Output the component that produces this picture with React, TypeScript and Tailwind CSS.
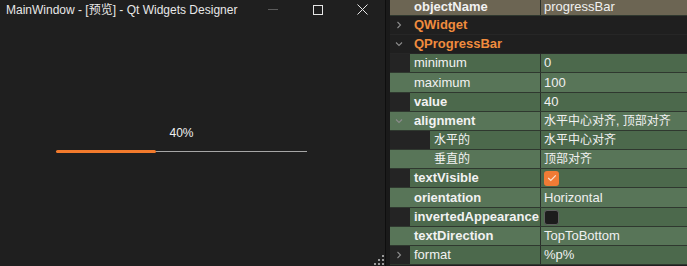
type Row = {
  name: string;
  value?: string;
  kind: 'header' | 'group' | 'prop';
  bold?: boolean;
  alt?: boolean;
  level?: number;
  chevron?: 'right' | 'down';
  check?: 'on' | 'off';
  tall?: boolean;
};

const rows: Row[] = [
  { name: 'objectName', value: 'progressBar', kind: 'header', bold: true },
  { name: 'QWidget', kind: 'group', chevron: 'right' },
  { name: 'QProgressBar', kind: 'group', chevron: 'down' },
  { name: 'minimum', value: '0', kind: 'prop' },
  { name: 'maximum', value: '100', kind: 'prop', alt: true, tall: true },
  { name: 'value', value: '40', kind: 'prop', bold: true },
  { name: 'alignment', value: '水平中心对齐, 顶部对齐', kind: 'prop', bold: true, alt: true, chevron: 'down' },
  { name: '水平的', value: '水平中心对齐', kind: 'prop', level: 1 },
  { name: '垂直的', value: '顶部对齐', kind: 'prop', level: 1, alt: true },
  { name: 'textVisible', kind: 'prop', bold: true, check: 'on' },
  { name: 'orientation', value: 'Horizontal', kind: 'prop', bold: true, alt: true, tall: true },
  { name: 'invertedAppearance', kind: 'prop', bold: true, check: 'off' },
  { name: 'textDirection', value: 'TopToBottom', kind: 'prop', bold: true, alt: true },
  { name: 'format', value: '%p%', kind: 'prop', chevron: 'right' },
];

const cjk = /[\u4e00-\u9fff]/;

function Chevron({ dir }: { dir: 'right' | 'down' }) {
  return (
    <svg width="8" height="8" viewBox="0 0 8 8" className="absolute left-[5px] top-1/2 -translate-y-1/2">
      {dir === 'right' ? (
        <path d="M2.5 1 L5.5 4 L2.5 7" fill="none" stroke="#8c8c8c" strokeWidth="1.1" />
      ) : (
        <path d="M1 2.5 L4 5.5 L7 2.5" fill="none" stroke="#8c8c8c" strokeWidth="1.1" />
      )}
    </svg>
  );
}

function CheckBox({ on }: { on: boolean }) {
  return on ? (
    <div className="h-[15px] w-[15px] rounded-[3px] bg-[#f07b35] flex items-center justify-center">
      <svg width="10" height="8" viewBox="0 0 10 8">
        <path d="M1.2 4 L3.8 6.4 L8.8 1.4" fill="none" stroke="#fbe3d2" strokeWidth="1.2" />
      </svg>
    </div>
  ) : (
    <div className="h-[15px] w-[15px] rounded-[3px] bg-[#1c1c1c] border border-[#5e5e5e]" />
  );
}

function PropRow({ row }: { row: Row }) {
  const height = row.kind === 'header' ? 'h-[18px]' : row.tall ? 'h-[20px]' : 'h-[19px]';

  if (row.kind === 'group') {
    return (
      <div className={`relative flex ${height} items-center border-b border-[#262626] bg-[#1f1f1f]`}>
        {row.chevron && <Chevron dir={row.chevron} />}
        <span className="pl-[24px] text-[13px] font-bold text-[#f08c3e]">{row.name}</span>
      </div>
    );
  }

  const bg =
    row.kind === 'header' ? 'bg-[#6c6553]' : row.alt ? 'bg-[#587558]' : 'bg-[#4c694c]';
  const indent = row.level === 1 ? 'w-[40px]' : 'w-[20px]';
  const indentBg = row.kind === 'header' || row.alt ? '' : 'bg-[#242424]';
  const nameSize = cjk.test(row.name) ? 'text-[12px]' : 'text-[13px]';
  const valueSize = row.value && cjk.test(row.value) ? 'text-[12px]' : 'text-[13px]';

  return (
    <div className={`flex ${height} border-b border-[#2f382f] ${bg}`}>
      <div className={`relative shrink-0 ${indent} ${indentBg}`}>
        {row.chevron && <Chevron dir={row.chevron} />}
      </div>
      <div
        className={`flex-1 flex items-center pl-[4px] border-r border-[#2a2f2a] ${nameSize} text-[#f2f2f2] whitespace-nowrap ${
          row.bold ? 'font-bold' : ''
        }`}
      >
        {row.name}
      </div>
      <div className={`w-[146px] shrink-0 flex items-center pl-[3px] ${valueSize} text-[#f0f0f0] whitespace-nowrap`}>
        {row.check ? <CheckBox on={row.check === 'on'} /> : <span>{row.value}</span>}
      </div>
    </div>
  );
}

function SizeGrip() {
  const dots = [
    [8, 0],
    [4, 4],
    [8, 4],
    [0, 8],
    [4, 8],
    [8, 8],
  ];
  return (
    <svg width="10" height="10" viewBox="0 0 10 10" className="absolute right-[1px] bottom-[1px]">
      {dots.map(([x, y]) => (
        <rect key={`${x}-${y}`} x={x} y={y} width="2" height="2" fill="#9a9a9a" />
      ))}
    </svg>
  );
}

export default function App() {
  return (
    <div
      className="flex h-[266px] w-[687px] overflow-hidden bg-[#1f1f1f]"
      style={{ fontFamily: '"Liberation Sans", "Noto Sans CJK SC", sans-serif' }}
    >
      {/* Preview window */}
      <div className="relative w-[385px] shrink-0 flex flex-col bg-[#1f1f1f]">
        <div className="flex h-[19px] items-center justify-between">
          <span className="pl-[6px] text-[12px] text-[#e8e8e8]">MainWindow - [预览] - Qt Widgets Designer</span>
          <div className="flex items-center">
            <div className="w-[45px] flex justify-center">
              <div className="h-px w-[10px] bg-[#5c5c5c]" />
            </div>
            <div className="w-[45px] flex justify-center">
              <div className="h-[10px] w-[10px] border border-[#e6e6e6]" />
            </div>
            <div className="w-[45px] flex justify-center">
              <svg width="11" height="11" viewBox="0 0 11 11">
                <path d="M0.5 0.5 L10.5 10.5 M10.5 0.5 L0.5 10.5" stroke="#e6e6e6" strokeWidth="1" />
              </svg>
            </div>
          </div>
        </div>

        <div className="flex flex-col items-center pt-[107px] pr-[22px]">
          <span className="text-[12px] text-[#f0f0f0] leading-[14px]">40%</span>
          <div className="mt-[10px] relative h-[3px] w-[251px]">
            <div className="absolute left-0 right-0 top-[1px] h-px bg-[#a6a6a6]" />
            <div className="absolute left-0 top-0 h-[3px] w-[100px] rounded-full bg-[#f27a2c]" />
          </div>
        </div>
        <SizeGrip />
      </div>

      {/* Splitter */}
      <div className="w-px shrink-0 bg-[#0e0e0e]" />
      <div className="w-[4px] shrink-0 bg-[#1a1a1a]" />

      {/* Property editor */}
      <div className="flex-1 overflow-hidden bg-[#1f1f1f]">
        <div className="mt-[-2px]">
          {rows.map((row) => (
            <PropRow key={row.name} row={row} />
          ))}
        </div>
      </div>
    </div>
  );
}
